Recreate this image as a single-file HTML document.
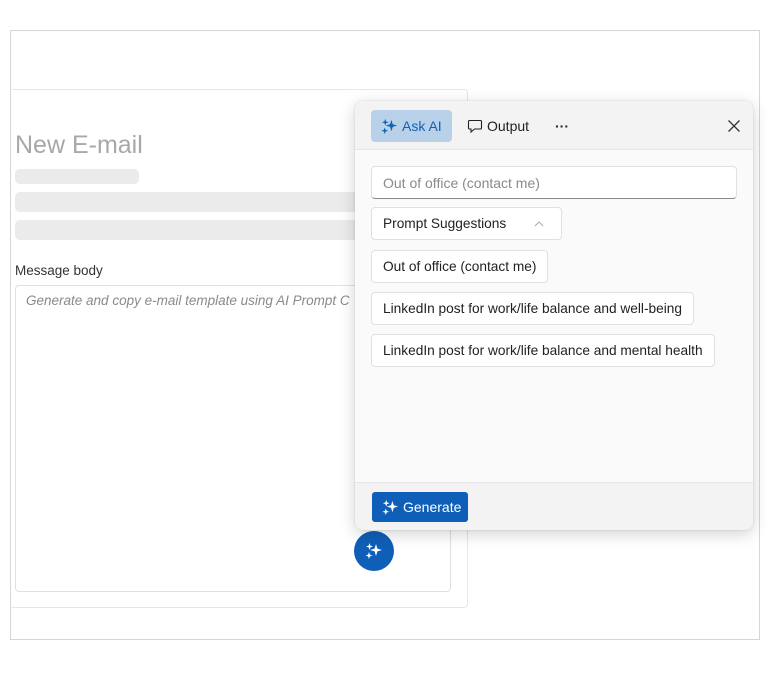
<!DOCTYPE html>
<html><head><style>
*{box-sizing:border-box;margin:0;padding:0}
body{width:770px;height:700px;background:#fff;font-family:"Liberation Sans",sans-serif;position:relative;overflow:hidden}
.outer{position:absolute;left:10px;top:30px;width:750px;height:610px;border:1px solid #d6d6d6}
.card{position:absolute;left:10px;top:89px;width:458px;height:519px;border:1px solid #e6e6e6;border-left:none;border-radius:0 4px 4px 0}
.title{position:absolute;left:15px;top:131px;font-size:25px;color:#a8a8a8}
.sk{position:absolute;background:#ebebeb;border-radius:5px}
.lbl{position:absolute;left:15px;top:263px;font-size:13.5px;color:#333}
.ta{position:absolute;left:15px;top:285px;width:436px;height:307px;border:1px solid #e0e0e0;border-radius:4px;padding:7px 10px;font-style:italic;color:#8a8a8a;font-size:13.5px;white-space:nowrap;overflow:hidden}
.fab{position:absolute;left:354px;top:531px;width:40px;height:40px;border-radius:50%;background:#0f5fb8;display:flex;align-items:center;justify-content:center}
.pop{position:absolute;left:355px;top:101px;width:398px;height:429px;background:#fafafa;border-radius:8px;box-shadow:0 4px 16px rgba(0,0,0,.18),0 0 2px rgba(0,0,0,.12);overflow:hidden}
.hd{height:49px;background:#f3f3f3;border-bottom:1px solid #e6e6e6;position:relative}
.ask{position:absolute;left:16px;top:9px;width:81px;height:32px;background:#b8d1e8;border-radius:4px;color:#1062b4;font-size:14px;display:flex;align-items:center;padding-left:9px;gap:3px}
.out{position:absolute;left:112px;top:17px;font-size:14px;color:#222;display:flex;align-items:center;gap:4px}
.dots{position:absolute;left:200px;top:17px;font-size:14px;color:#222;font-weight:bold}
.x{position:absolute;right:12px;top:18px}
.inp{position:absolute;left:16px;top:65px;width:366px;height:33px;background:#fff;border:1px solid #e0e0e0;border-bottom:1px solid #8a8a8a;border-radius:4px;padding:8px 11px;font-size:14px;color:#8a8a8a}
.btn{position:absolute;left:16px;height:33px;background:#fff;border:1px solid #e0e0e0;border-radius:4px;padding:0 11px;font-size:13.7px;color:#222;display:flex;align-items:center;white-space:nowrap}
.ft{position:absolute;left:0;top:381px;width:100%;height:48px;background:#f3f3f3;border-top:1px solid #e6e6e6}
.gen{position:absolute;left:17px;top:9px;width:96px;height:30px;background:#0f5fb8;border-radius:3px;color:#fff;font-size:14px;display:flex;align-items:center;padding-left:9px;gap:3px}
</style></head><body>
<div class="outer"></div>
<div class="card"></div>
<div class="title">New E-mail</div>
<div class="sk" style="left:15px;top:169px;width:124px;height:15px"></div>
<div class="sk" style="left:15px;top:192px;width:345px;height:20px"></div>
<div class="sk" style="left:15px;top:220px;width:345px;height:20px"></div>
<div class="lbl">Message body</div>
<div class="ta">Generate and copy e-mail template using AI Prompt C</div>
<div class="fab"><svg width="20" height="20" viewBox="0 0 20 20" fill="#fff"><path d="M12 3 L13.4 7.6 L18 9 L13.4 10.4 L12 15 L10.6 10.4 L6 9 L10.6 7.6Z"/><path d="M5.5 2 L6.4 4.6 L9 5.5 L6.4 6.4 L5.5 9 L4.6 6.4 L2 5.5 L4.6 4.6Z"/><path d="M5 11 L5.9 13.6 L8.5 14.5 L5.9 15.4 L5 18 L4.1 15.4 L1.5 14.5 L4.1 13.6Z"/></svg></div>
<div class="pop">
<div class="hd">
<div class="ask"><svg width="19" height="19" viewBox="0 0 20 20" fill="#1062b4"><path d="M12 3 L13.4 7.6 L18 9 L13.4 10.4 L12 15 L10.6 10.4 L6 9 L10.6 7.6Z"/><path d="M5.5 2 L6.4 4.6 L9 5.5 L6.4 6.4 L5.5 9 L4.6 6.4 L2 5.5 L4.6 4.6Z"/><path d="M5 11 L5.9 13.6 L8.5 14.5 L5.9 15.4 L5 18 L4.1 15.4 L1.5 14.5 L4.1 13.6Z"/></svg>Ask AI</div>
<div class="out"><svg width="16" height="16" viewBox="0 0 16 16" fill="none" stroke="#222" stroke-width="1.1"><path d="M2.5 2.5h11a1 1 0 0 1 1 1v6.5a1 1 0 0 1-1 1H7.5L4 14v-3H2.5a1 1 0 0 1-1-1V3.5a1 1 0 0 1 1-1z"/></svg>Output</div>
<div class="dots">···</div>
<svg class="x" width="14" height="14" viewBox="0 0 14 14" stroke="#333" stroke-width="1.3"><path d="M1.5 1.5L12.5 12.5M12.5 1.5L1.5 12.5"/></svg>
</div>
<div class="inp">Out of office (contact me)</div>
<div class="btn" style="top:106px;width:191px">Prompt Suggestions<svg style="position:absolute;left:162px;top:13px" width="10" height="6" viewBox="0 0 10 6" fill="none" stroke="#aaa"><path d="M1 5L5 1L9 5"/></svg></div>
<div class="btn" style="top:149px">Out of office (contact me)</div>
<div class="btn" style="top:191px">LinkedIn post for work/life balance and well-being</div>
<div class="btn" style="top:233px">LinkedIn post for work/life balance and mental health</div>
<div class="ft"><div class="gen"><svg width="19" height="19" viewBox="0 0 20 20" fill="#fff"><path d="M12 3 L13.4 7.6 L18 9 L13.4 10.4 L12 15 L10.6 10.4 L6 9 L10.6 7.6Z"/><path d="M5.5 2 L6.4 4.6 L9 5.5 L6.4 6.4 L5.5 9 L4.6 6.4 L2 5.5 L4.6 4.6Z"/><path d="M5 11 L5.9 13.6 L8.5 14.5 L5.9 15.4 L5 18 L4.1 15.4 L1.5 14.5 L4.1 13.6Z"/></svg>Generate</div></div>
</div>
</body></html>
